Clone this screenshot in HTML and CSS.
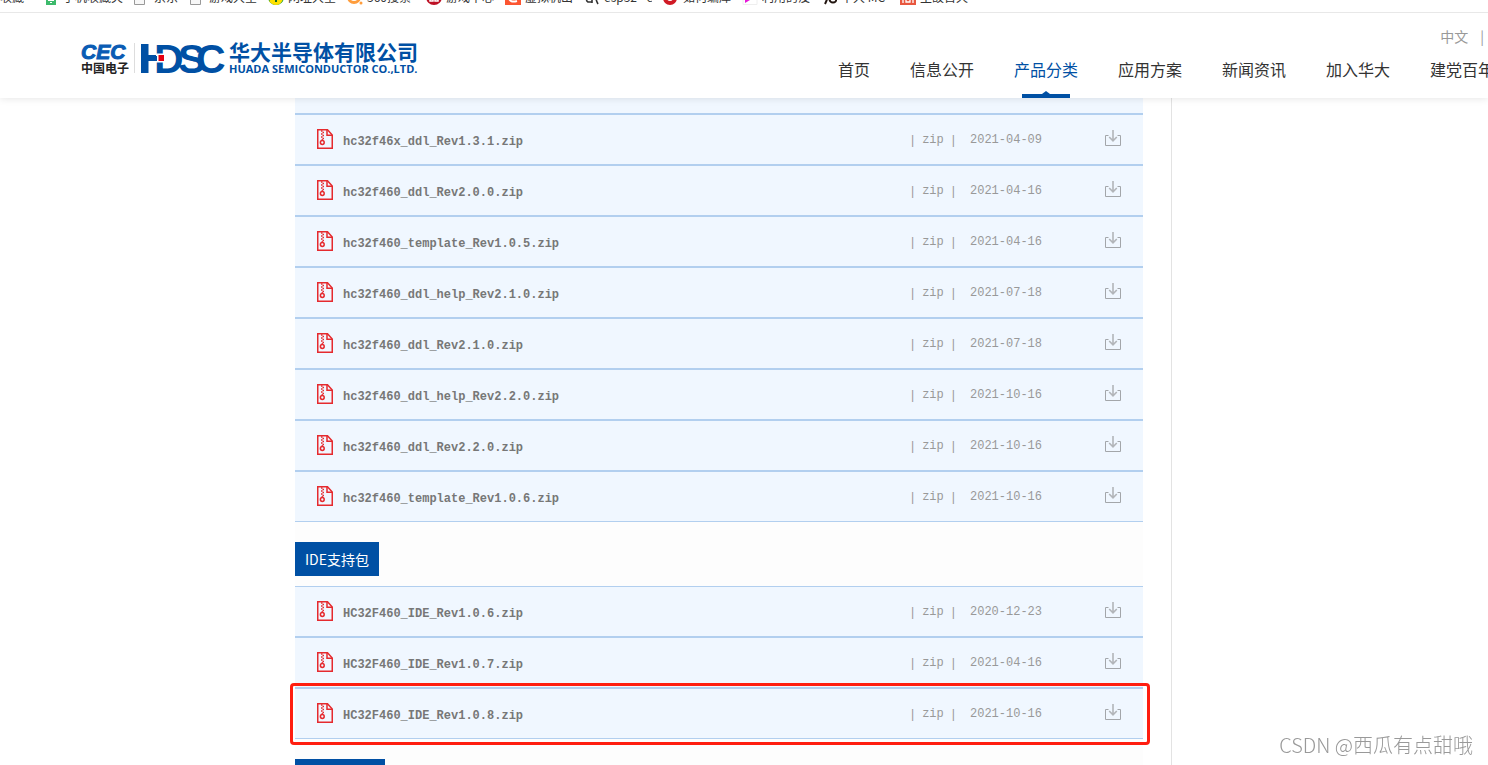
FILE: index.html
```html
<!DOCTYPE html>
<html lang="zh-CN">
<head>
    <meta charset="UTF-8">
    <meta name="viewport" content="width=device-width, initial-scale=1.0">
    <title>华大半导体有限公司</title>
    <link rel="stylesheet" href="styles.css">
</head>
<body>
    <svg class="symbols" aria-hidden="true">
        <symbol id="zip" viewBox="0 0 16 20">
            <path d="M.75 .75H10.5L15.25 6V19.25H.75Z" fill="none" stroke="#e52a2e" stroke-width="1.5"/>
            <path d="M10 1V6.2H15" fill="none" stroke="#e52a2e" stroke-width="1.5"/>
            <path d="M4 2h1.500M5.500 3.500H7M4 5h1.500M5.500 6.500H7M4 8h1.500M5.500 9.500H7M4.500 11h1.500" stroke="#e52a2e" stroke-width="1.3"/>
            <circle cx="5.3" cy="13.5" r="1.9" fill="none" stroke="#e52a2e" stroke-width="1.5"/>
        </symbol>
        <symbol id="down" viewBox="0 0 16 17">
            <path d="M3.5 5.5H.5V15.5H15.5V5.5H12.5" fill="none" stroke="#a3a6aa"/>
            <path d="M8 0V10.5M4.2 7L8 10.8L11.8 7" fill="none" stroke="#b2b5b9" stroke-width="1.6"/>
        </symbol>
    </svg>

    <div class="bookmarks">
        <a href="#" class="first">收藏</a>
        <a href="#"><svg viewBox="0 0 16 16"><path d="M3 0H13V16H3Z" fill="#3dba6c"/><path d="M5 2H11V12H5Z" fill="#fff"/><path d="M7 13.5H9" stroke="#fff"/></svg><span class="long">手机收藏夹</span></a>
        <a href="#"><svg viewBox="0 0 16 16"><path d="M.5 3.5H10.5V15.5H.5Z" fill="#f7f7f7" stroke="#999"/></svg><span class="short">京东</span></a>
        <a href="#"><svg viewBox="0 0 16 16"><path d="M1.5 3.5H11.5V15.5H1.5Z" fill="#f7f7f7" stroke="#999"/></svg><span>游戏大全</span></a>
        <a href="#"><svg viewBox="0 0 16 16"><circle cx="8" cy="8" r="8" fill="#159a3c"/><path d="M1 12Q7 7 15 10Q13 16 8 16Q4 16 1 12" fill="#ffe000"/><path d="M8 6V13" stroke="#176b20" stroke-width="2"/></svg><span>网址大全</span></a>
        <a href="#"><svg viewBox="0 0 16 16"><circle cx="7" cy="8" r="5.5" fill="none" stroke="#ff9d3c" stroke-width="3"/><circle cx="14" cy="14" r="1.5" fill="#ff9d3c"/></svg><span>360搜索</span></a>
        <a href="#"><svg viewBox="0 0 16 16"><circle cx="8" cy="8" r="8" fill="#bd1024"/><path d="M4 7H7V12H4ZM9 7H12V12H9Z" fill="none" stroke="#fff" stroke-width="1.5"/></svg><span>游戏中心</span></a>
        <a href="#"><svg viewBox="0 0 16 16"><path d="M0 0H16V16H0Z" fill="#fc5531"/><path d="M12 5Q4 3 4 9Q5 14 12 12" fill="none" stroke="#fff" stroke-width="2"/></svg><span>虚拟机出</span></a>
        <a href="#"><svg viewBox="0 0 16 16"><path d="M7 8H4Q1 11 4 13H8M8 5V14M12 4Q11 10 14 15" fill="none" stroke="#333" stroke-width="1.6"/></svg><span>esp32 - e</span></a>
        <a href="#"><svg viewBox="0 0 16 16"><circle cx="7" cy="9" r="5" fill="none" stroke="#d01a25" stroke-width="4"/></svg><span>如何编库</span></a>
        <a href="#"><svg viewBox="0 0 16 16"><path d="M1 1H15V15.5H1Z" fill="#fff" stroke="#eee"/><path d="M3 3L13 8L3 14Z" fill="#e619d9"/></svg><span>利用的没</span></a>
        <a href="#"><svg viewBox="0 0 16 16"><path d="M2 7H7Q6 11 4 15" fill="none" stroke="#21140f" stroke-width="2"/><circle cx="12" cy="10" r="3.5" fill="none" stroke="#21140f" stroke-width="2"/></svg><span>华大 MC</span></a>
        <a href="#"><svg viewBox="0 0 16 16"><path d="M0 0H16V16H0Z" fill="#e8573f"/><path d="M3 14V6H13V14M6 8V13H10V8" fill="none" stroke="#fff" stroke-width="1.3"/></svg><span>主故百天</span></a>
    </div>

    <header>
        <a href="#" class="logo" aria-label="华大半导体有限公司">
            <svg viewBox="0 0 344 36" width="344" height="36">
                <text class="logo-cec" x="0" y="18">CEC</text>
                <text class="logo-cn" x="0" y="32">中国电子</text>
                <path d="M53.5 2V32" stroke="#ddd"/>
                <path d="M60 3H67.500V32H60ZM67 14H80V20H67Z" fill="#0050a4"/>
                <text class="logo-mark"><tspan x="73" y="32">D</tspan><tspan x="97" y="32">S</tspan><tspan x="115" y="32">C</tspan></text>
                <path d="M75 12.500H84V21.500H75Z" fill="#fff"/>
                <path d="M67 15H76V20H67Z" fill="#0050a4"/>
                <path d="M77.500 14H83V20H77.500Z" fill="#e60012"/>
                <text class="logo-name" x="148" y="19">华大半导体有限公司</text>
                <text class="logo-en" x="148" y="32">HUADA SEMICONDUCTOR CO.,LTD.</text>
            </svg>
        </a>
        <div class="menu">
            <div class="lang"><a href="#">中文</a><span>|</span></div>
            <nav>
                <a href="#">首页</a>
                <a href="#">信息公开</a>
                <a href="#" class="active">产品分类</a>
                <a href="#">应用方案</a>
                <a href="#">新闻资讯</a>
                <a href="#">加入华大</a>
                <a href="#">建党百年</a>
            </nav>
        </div>
    </header>

    <main>
        <div class="downloads">
            <ul>
                <li class="cut"></li>
                <li><svg class="file"><use href="#zip"/></svg><a href="#" class="name">hc32f46x_ddl_Rev1.3.1.zip</a><span class="type"><i>|</i>zip<i>|</i></span><span class="date">2021-04-09</span><a href="#" class="get" aria-label="下载"><svg><use href="#down"/></svg></a></li>
                <li><svg class="file"><use href="#zip"/></svg><a href="#" class="name">hc32f460_ddl_Rev2.0.0.zip</a><span class="type"><i>|</i>zip<i>|</i></span><span class="date">2021-04-16</span><a href="#" class="get" aria-label="下载"><svg><use href="#down"/></svg></a></li>
                <li><svg class="file"><use href="#zip"/></svg><a href="#" class="name">hc32f460_template_Rev1.0.5.zip</a><span class="type"><i>|</i>zip<i>|</i></span><span class="date">2021-04-16</span><a href="#" class="get" aria-label="下载"><svg><use href="#down"/></svg></a></li>
                <li><svg class="file"><use href="#zip"/></svg><a href="#" class="name">hc32f460_ddl_help_Rev2.1.0.zip</a><span class="type"><i>|</i>zip<i>|</i></span><span class="date">2021-07-18</span><a href="#" class="get" aria-label="下载"><svg><use href="#down"/></svg></a></li>
                <li><svg class="file"><use href="#zip"/></svg><a href="#" class="name">hc32f460_ddl_Rev2.1.0.zip</a><span class="type"><i>|</i>zip<i>|</i></span><span class="date">2021-07-18</span><a href="#" class="get" aria-label="下载"><svg><use href="#down"/></svg></a></li>
                <li><svg class="file"><use href="#zip"/></svg><a href="#" class="name">hc32f460_ddl_help_Rev2.2.0.zip</a><span class="type"><i>|</i>zip<i>|</i></span><span class="date">2021-10-16</span><a href="#" class="get" aria-label="下载"><svg><use href="#down"/></svg></a></li>
                <li><svg class="file"><use href="#zip"/></svg><a href="#" class="name">hc32f460_ddl_Rev2.2.0.zip</a><span class="type"><i>|</i>zip<i>|</i></span><span class="date">2021-10-16</span><a href="#" class="get" aria-label="下载"><svg><use href="#down"/></svg></a></li>
                <li><svg class="file"><use href="#zip"/></svg><a href="#" class="name">hc32f460_template_Rev1.0.6.zip</a><span class="type"><i>|</i>zip<i>|</i></span><span class="date">2021-10-16</span><a href="#" class="get" aria-label="下载"><svg><use href="#down"/></svg></a></li>
            </ul>
            <h3>IDE支持包</h3>
            <ul>
                <li><svg class="file"><use href="#zip"/></svg><a href="#" class="name">HC32F460_IDE_Rev1.0.6.zip</a><span class="type"><i>|</i>zip<i>|</i></span><span class="date">2020-12-23</span><a href="#" class="get" aria-label="下载"><svg><use href="#down"/></svg></a></li>
                <li><svg class="file"><use href="#zip"/></svg><a href="#" class="name">HC32F460_IDE_Rev1.0.7.zip</a><span class="type"><i>|</i>zip<i>|</i></span><span class="date">2021-04-16</span><a href="#" class="get" aria-label="下载"><svg><use href="#down"/></svg></a></li>
                <li class="marked"><svg class="file"><use href="#zip"/></svg><a href="#" class="name">HC32F460_IDE_Rev1.0.8.zip</a><span class="type"><i>|</i>zip<i>|</i></span><span class="date">2021-10-16</span><a href="#" class="get" aria-label="下载"><svg><use href="#down"/></svg></a></li>
            </ul>
            <h3 class="next"></h3>
        </div>
    </main>
    <div class="watermark">CSDN @西瓜有点甜哦</div>
</body>
</html>
```

FILE: styles.css
```css
* {
    box-sizing: border-box;
}
body {
    margin: 0;
    height: 100vh;
    overflow: hidden;
    display: flex;
    flex-direction: column;
    background-color: #fff;
    color: #333;
    font-family: "Noto Sans CJK SC", sans-serif;
}
a {
    color: inherit;
    text-decoration: none;
}
ul {
    list-style: none;
    margin: 0;
    padding: 0;
}
.symbols {
    display: none;
}

/* bookmarks */
.bookmarks {
    flex: none;
    display: flex;
    align-items: flex-end;
    gap: 11px;
    height: 13px;
    padding-bottom: 6px;
    border-bottom: 1px solid #e8e8e8;
    overflow: hidden;
    font-size: 12px;
    line-height: 18px;
    white-space: nowrap;
}
.bookmarks a {
    flex: none;
    display: flex;
    align-items: center;
    gap: 4px;
}
.bookmarks .first {
    width: 32px;
}
.bookmarks svg {
    width: 16px;
    height: 16px;
}
.bookmarks span {
    width: 48px;
    overflow: hidden;
}
.bookmarks .long {
    width: 60px;
}
.bookmarks .short {
    width: 24px;
}

/* header */
header {
    position: relative;
    z-index: 1;
    flex: none;
    display: flex;
    justify-content: space-between;
    height: 85px;
    padding-left: 81px;
    background-color: #fff;
    box-shadow: 0 0 8px rgba(0, 0, 0, 0.12);
    clip-path: inset(0 0 -12px 0);
}
.logo {
    padding-top: 28px;
}
.logo-cec {
    font: italic bold 21px "Liberation Sans", sans-serif;
    fill: #0a5cb4;
    stroke: #0a5cb4;
    stroke-width: 1px;
}
.logo-cn {
    font: bold 12px "Noto Sans CJK SC", sans-serif;
    fill: #222;
}
.logo-mark {
    font: bold 41px "Liberation Sans", sans-serif;
    fill: #0050a4;
}
.logo-name {
    font: bold 21px "Noto Sans CJK SC", sans-serif;
    fill: #0050a4;
}
.logo-en {
    font: bold 11px "Open Sans", sans-serif;
    fill: #0050a4;
}
.menu {
    width: 650px;
    overflow: hidden;
}
.lang {
    display: flex;
    justify-content: flex-end;
    gap: 12px;
    padding: 13px 4px 0 0;
    color: #999;
    font-size: 14px;
    line-height: 20px;
}
nav {
    display: flex;
    gap: 40px;
    padding-top: 11px;
    font-size: 16px;
    line-height: 24px;
    white-space: nowrap;
}
nav a {
    position: relative;
    flex: none;
    height: 41px;
}
nav .active {
    color: #0050a4;
}
nav .active::before {
    content: "";
    position: absolute;
    left: 8px;
    right: 8px;
    bottom: 0;
    height: 4px;
    background-color: #0050a4;
}
nav .active::after {
    content: "";
    position: absolute;
    left: 28px;
    bottom: 4px;
    border: solid transparent;
    border-width: 0 4px 3px;
    border-bottom-color: #0050a4;
}

/* file lists */
main {
    flex: 1;
    width: 1172px;
    max-width: 100%;
    padding: 0 28px 0 295px;
    border-right: 1px solid #e3e3e3;
}
.downloads {
    height: 100%;
    background-color: #fdfdfd;
}
li {
    position: relative;
    display: flex;
    align-items: center;
    height: 51px;
    padding: 0 22px 2px;
    border: solid #b2cfef;
    border-width: 1px 0;
    background-color: #f0f7ff;
    color: #999;
    font: 12px "Liberation Mono", monospace;
}
.cut {
    height: 16px;
    border-top: 0;
}
.file {
    width: 16px;
    height: 20px;
    margin-right: 10px;
}
.name {
    flex: 1;
    padding-top: 6px;
    color: #777;
    font-weight: bold;
}
.type {
    display: flex;
    gap: 6px;
    padding-top: 4px;
}
.type i {
    font-style: normal;
    padding-top: 1px;
}
.date {
    margin: 0 63px 0 13px;
    padding-top: 2px;
}
.get svg {
    display: block;
    width: 16px;
    height: 17px;
}
h3 {
    width: fit-content;
    height: 34px;
    margin: 20px 0 10px;
    padding: 0 10px;
    background-color: #0050a4;
    color: #fff;
    font-size: 14px;
    font-weight: normal;
    line-height: 34px;
}
.next {
    width: 90px;
    margin-bottom: 0;
}
.marked::after {
    content: "";
    position: absolute;
    inset: -6px -7px -7px -5px;
    border: 3px solid #ff1e10;
    border-radius: 4px;
}
.watermark {
    position: fixed;
    right: 15px;
    bottom: 5px;
    color: #999;
    font-size: 20px;
    font-weight: 300;
    line-height: 30px;
}
```
